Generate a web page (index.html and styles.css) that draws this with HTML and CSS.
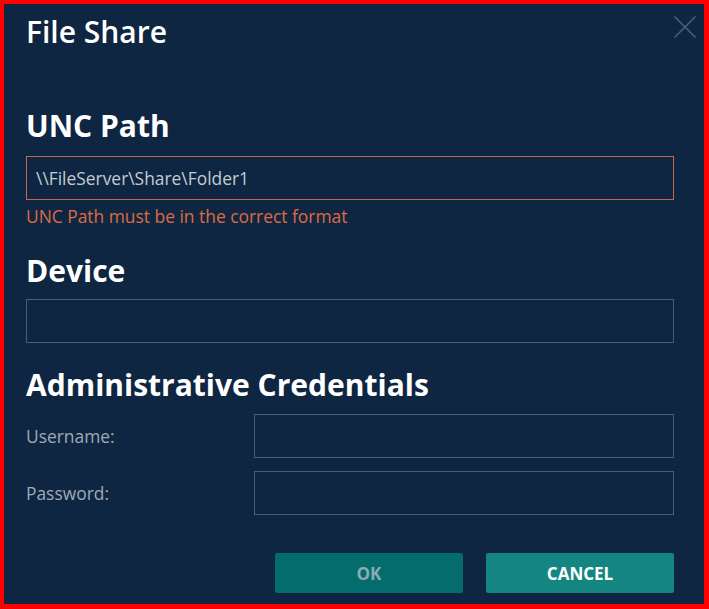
FILE: index.html
```html
<!DOCTYPE html>
<html lang="en">
<head>
<meta charset="utf-8">
<title>File Share</title>
<link rel="stylesheet" href="styles.css">
</head>
<body>
<div class="dialog">
  <h1 class="title">File Share</h1>
  <button class="close" aria-label="Close">
    <svg width="24" height="24" viewBox="0 0 24 24"><path d="M1.5 1.5L22.5 22.5M22.5 1.5L1.5 22.5" stroke="#4d5e73" stroke-width="1.6" fill="none"/></svg>
  </button>

  <section class="group group-unc">
    <h2 class="heading">UNC Path</h2>
    <div class="input input-error">\\FileServer\Share\Folder1</div>
    <div class="error">UNC Path must be in the correct format</div>
  </section>

  <section class="group group-device">
    <h2 class="heading">Device</h2>
    <div class="input"></div>
  </section>

  <section class="group group-creds">
    <h2 class="heading">Administrative Credentials</h2>
    <div class="cred-grid">
      <span class="cred-label">Username:</span>
      <div class="input"></div>
      <span class="cred-label">Password:</span>
      <div class="input"></div>
    </div>
  </section>

  <div class="actions">
    <button class="btn btn-ok">OK</button>
    <button class="btn btn-cancel">CANCEL</button>
  </div>
</div>
</body>
</html>
```

FILE: styles.css
```css
html, body {
  margin: 0;
  padding: 0;
}
body {
  background: #ff0000;
  width: 709px;
  height: 609px;
  overflow: hidden;
  font-family: "Open Sans", "Noto Sans", sans-serif;
}
.dialog {
  position: relative;
  box-sizing: border-box;
  width: 700px;
  height: 600px;
  margin: 4px 5px 5px 4px;
  background: #0e2641;
  padding: 12px 30px 0 22px;
  display: flex;
  flex-direction: column;
}
.title {
  margin: 0;
  font-size: 30px;
  line-height: 32px;
  font-weight: 600;
  color: #ffffff;
}
.close {
  position: absolute;
  top: 11px;
  right: 7px;
  width: 24px;
  height: 24px;
  padding: 0;
  border: 0;
  background: transparent;
  display: flex;
}
.heading {
  margin: 0 0 12px;
  font-size: 30px;
  line-height: 34px;
  font-weight: 700;
  color: #ffffff;
}
.group-unc { margin-top: 61px; }
.group-unc .heading { margin-bottom: 13px; }
.group-device { margin-top: 27px; }
.group-device .heading { margin-bottom: 11px; }
.group-creds { margin-top: 25px; }
.input {
  box-sizing: border-box;
  height: 44px;
  border: 1px solid #4b5d75;
  padding: 0 9px;
  display: flex;
  align-items: center;
  font-size: 17.4px;
  line-height: 22px;
  color: #c5cbd2;
}
.input-error {
  border-color: #c4694d;
}
.error {
  margin-top: 5px;
  font-size: 17.4px;
  line-height: 22px;
  color: #de6b41;
}
.cred-grid {
  display: grid;
  grid-template-columns: 228px 1fr;
  row-gap: 13px;
  align-items: center;
}
.cred-label {
  font-size: 17.4px;
  line-height: 22px;
  color: #a0aab6;
}
.actions {
  margin-top: 38px;
  display: flex;
  justify-content: flex-end;
  gap: 23px;
}
.btn {
  width: 188px;
  height: 40px;
  border: 0;
  border-radius: 2px;
  font-family: "Open Sans", "Noto Sans", sans-serif;
  font-size: 17px;
  font-weight: 700;
  padding: 0;
}
.btn-ok {
  background: #046c6d;
  color: #8eaab0;
}
.btn-cancel {
  background: #148580;
  color: #ffffff;
}
```
